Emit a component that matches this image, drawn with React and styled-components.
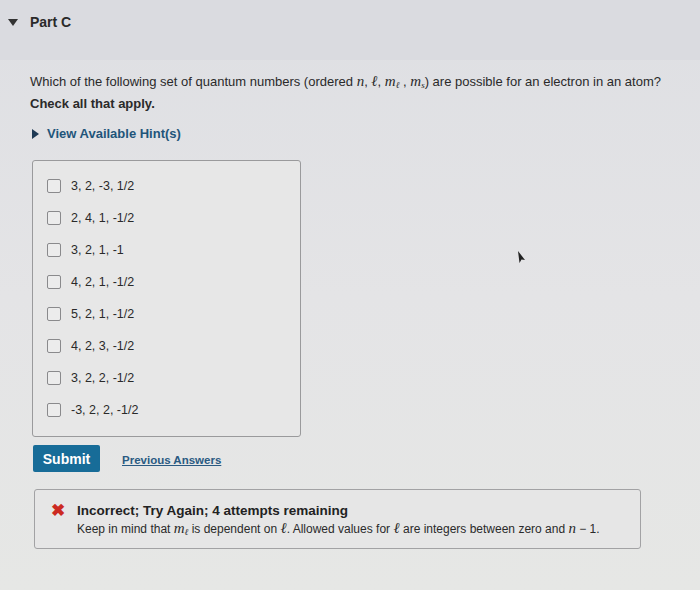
import React from "react";
import styled, { createGlobalStyle } from "styled-components";

const Global = createGlobalStyle`
  html, body { margin: 0; padding: 0; }
  body {
    width: 700px; height: 590px; overflow: hidden;
    background: #e3e3e5;
    font-family: "Liberation Sans", Arial, sans-serif;
    color: #222;
  }
`;

const Page = styled.div`
  width: 700px;
  height: 590px;
  display: flex;
  flex-direction: column;
  background: linear-gradient(180deg, #dedfe3 0%, #e4e4e6 50%, #e6e7e5 100%);
  position: relative;
`;

const Header = styled.div`
  height: 60px;
  display: flex;
  align-items: center;
  gap: 12px;
  padding: 0 0 16px 8px;
  box-sizing: border-box;
  background: #dadbe0;
`;

const Caret = styled.span`
  width: 0; height: 0;
  border-left: ${p => p.$down ? "5px solid transparent" : `7px solid ${p.$color}`};
  border-right: ${p => p.$down ? "5px solid transparent" : "0"};
  border-top: ${p => p.$down ? `7px solid ${p.$color}` : "5px solid transparent"};
  border-bottom: ${p => p.$down ? "0" : "5px solid transparent"};
`;

const PartTitle = styled.h2`
  margin: 0;
  font-size: 14px;
  font-weight: bold;
  color: #2a2a2a;
`;

const Body = styled.div`
  padding: 11px 0 0 30px;
  display: flex;
  flex-direction: column;
`;

const Question = styled.p`
  margin: 0;
  font-size: 13px;
  line-height: 20px;
  color: #2a2a2a;
`;

const Strong = styled.p`
  margin: 0;
  font-size: 13px;
  line-height: 18px;
  font-weight: bold;
  color: #2a2a2a;
`;

const M = styled.span`
  font-family: "Liberation Serif", "DejaVu Serif", serif;
  font-style: italic;
  font-size: 15px;
`;

const Sub = styled.sub`
  font-size: 9px;
  vertical-align: -2px;
`;

const Hint = styled.div`
  margin-top: 13px;
  margin-left: 2px;
  height: 15px;
  display: flex;
  align-items: center;
  gap: 8px;
  font-size: 13px;
  font-weight: bold;
  color: #1f557a;
`;

const Choices = styled.div`
  margin-top: 19px;
  margin-left: 2px;
  width: 269px;
  height: 277px;
  box-sizing: border-box;
  border: 1px solid #9a9a9c;
  border-radius: 3px;
  background: #e7e7e7;
  padding: 18px 0 0 14px;
  display: flex;
  flex-direction: column;
  gap: 18px;
`;

const Choice = styled.label`
  display: flex;
  align-items: center;
  gap: 10px;
  height: 14px;
  font-size: 12.5px;
  color: #2a2a2a;
`;

const Box = styled.span`
  width: 12px;
  height: 12px;
  border: 1px solid #8a8a8c;
  border-radius: 2px;
  background: #ececec;
`;

const Actions = styled.div`
  margin-top: 8px;
  margin-left: 3px;
  display: flex;
  align-items: center;
  gap: 22px;
`;

const Submit = styled.button`
  width: 67px;
  height: 27px;
  border: none;
  border-radius: 2px;
  background: #176c98;
  color: #fff;
  font-family: "Liberation Sans", Arial, sans-serif;
  font-size: 14px;
  font-weight: bold;
  padding: 0;
`;

const Link = styled.a`
  font-size: 11.5px;
  font-weight: bold;
  color: #2a5a82;
  text-decoration: underline;
  margin-top: 2px;
`;

const Feedback = styled.div`
  margin-top: 17px;
  margin-left: 4px;
  width: 607px;
  height: 60px;
  box-sizing: border-box;
  border: 1px solid #a2a2a4;
  border-radius: 3px;
  background: #e6e6e6;
  padding: 12px 0 0 16px;
  display: flex;
  gap: 12px;
`;

const XMark = styled.span`
  color: #cc2a22;
  font-size: 17px;
  font-weight: bold;
  line-height: 16px;
  margin-top: 1px;
`;

const FbText = styled.div`
  display: flex;
  flex-direction: column;
`;

const FbTitle = styled.div`
  font-size: 13.5px;
  font-weight: bold;
  line-height: 17px;
  color: #222;
`;

const FbNote = styled.div`
  font-size: 12px;
  line-height: 18px;
  color: #2a2a2a;
`;

const Cursor = styled.svg`
  position: absolute;
  left: 515px;
  top: 250px;
`;

const choices = [
  "3, 2, -3, 1/2",
  "2, 4, 1, -1/2",
  "3, 2, 1, -1",
  "4, 2, 1, -1/2",
  "5, 2, 1, -1/2",
  "4, 2, 3, -1/2",
  "3, 2, 2, -1/2",
  "-3, 2, 2, -1/2",
];

export default function App() {
  return (
    <>
      <Global />
      <Page>
        <Header>
          <Caret $down $color="#333" />
          <PartTitle>Part C</PartTitle>
        </Header>
        <Body>
          <Question>
            Which of the following set of quantum numbers (ordered <M>n</M>, <M>ℓ</M>, <M>m<Sub>ℓ</Sub></M> , <M>m<Sub>s</Sub></M>) are possible for an electron in an atom?
          </Question>
          <Strong>Check all that apply.</Strong>
          <Hint>
            <Caret $color="#1f3a55" />
            View Available Hint(s)
          </Hint>
          <Choices>
            {choices.map(c => (
              <Choice key={c}>
                <Box />
                {c}
              </Choice>
            ))}
          </Choices>
          <Actions>
            <Submit>Submit</Submit>
            <Link>Previous Answers</Link>
          </Actions>
          <Feedback>
            <XMark>✖</XMark>
            <FbText>
              <FbTitle>Incorrect; Try Again; 4 attempts remaining</FbTitle>
              <FbNote>
                Keep in mind that <M>m<Sub>ℓ</Sub></M> is dependent on <M>ℓ</M>. Allowed values for <M>ℓ</M> are integers between zero and <M>n</M> − 1.
              </FbNote>
            </FbText>
          </Feedback>
        </Body>
        <Cursor width="12" height="14" viewBox="0 0 12 14">
          <path d="M3 1 L10 10 L6.5 9.5 L4.5 13 Z" fill="#222" />
        </Cursor>
      </Page>
    </>
  );
}
